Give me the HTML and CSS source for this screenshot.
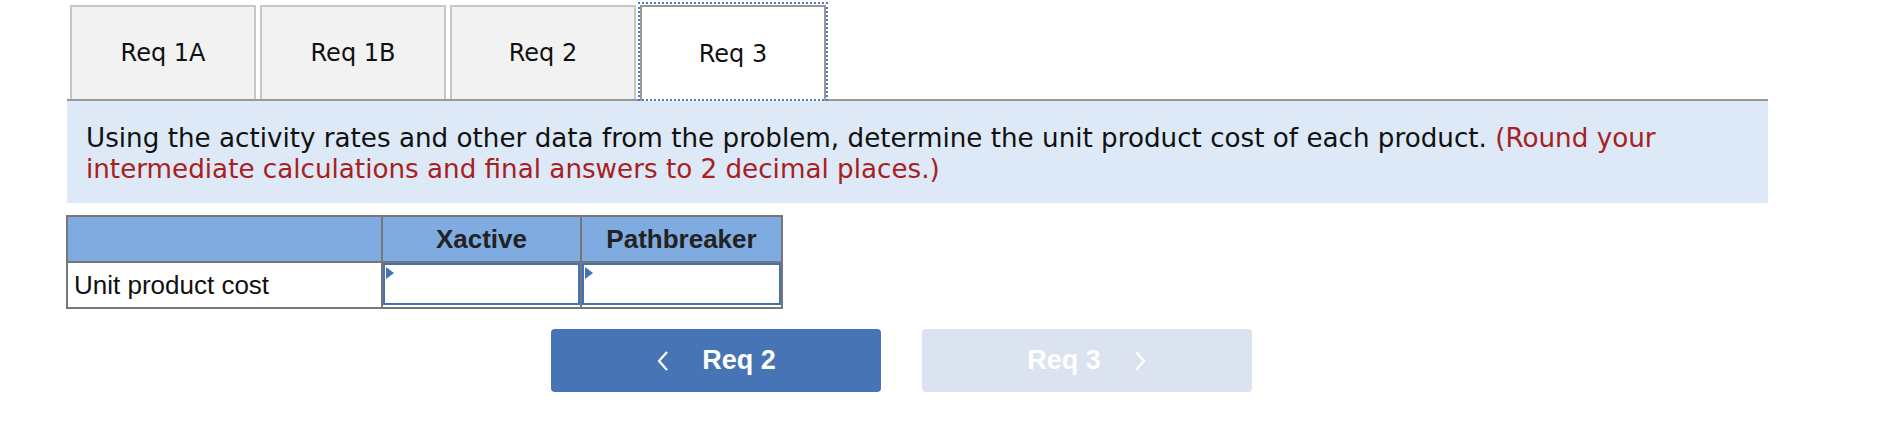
FILE: index.html
```html
<!DOCTYPE html>
<html lang="en">
<head>
<meta charset="utf-8">
<title>Req 3</title>
<link rel="stylesheet" href="styles.css">
</head>
<body>
<div class="page">
  <div class="tabs">
    <div class="tab">Req 1A</div>
    <div class="tab">Req 1B</div>
    <div class="tab">Req 2</div>
    <div class="tab active">Req 3</div>
  </div>
  <div class="panel">
    <p class="instr">Using the activity rates and other data from the problem, determine the unit product cost of each product. <span class="note">(Round your intermediate calculations and final answers to 2 decimal places.)</span></p>
  </div>
  <table class="grid">
    <thead>
      <tr><th class="c1"></th><th class="c2">Xactive</th><th class="c3">Pathbreaker</th></tr>
    </thead>
    <tbody>
      <tr>
        <td class="label">Unit product cost</td>
        <td class="cell"><div class="input"><span class="flag"></span></div></td>
        <td class="cell"><div class="input"><span class="flag"></span></div></td>
      </tr>
    </tbody>
  </table>
  <div class="nav">
    <button class="btn prev"><svg class="chev" width="14" height="22" viewBox="0 0 14 22"><polyline points="11,2 3,11 11,20" fill="none" stroke="#fff" stroke-width="2.2"/></svg><span>Req 2</span></button>
    <button class="btn next"><span>Req 3</span><svg class="chev" width="14" height="22" viewBox="0 0 14 22"><polyline points="3,2 11,11 3,20" fill="none" stroke="#fff" stroke-width="2.2"/></svg></button>
  </div>
</div>
</body>
</html>
```
FILE: styles.css
```css
* { box-sizing: border-box; }
html, body { margin: 0; padding: 0; background: #fff; }
.page { padding-left: 67px; width: 1768px; }

.tabs {
  display: flex;
  gap: 4px;
  padding-left: 3px;
  padding-top: 5px;
  border-bottom: 2px solid #999;
  height: 101px;
}
.tab {
  width: 186px;
  height: 94px;
  background: #f2f2f2;
  border: 2px solid #c6c6c6;
  border-bottom: 0;
  display: flex;
  align-items: center;
  justify-content: center;
  font-family: "DejaVu Sans", Verdana, sans-serif;
  font-size: 24px;
  color: #111;
}
.tab.active {
  background: #fff;
  border-color: #999;
  height: 96px;
  position: relative;
  margin-bottom: -2px;
}
.tab.active::after {
  content: "";
  position: absolute;
  left: -4px;
  right: -4px;
  top: -5px;
  bottom: 0;
  border: 2px dotted #4a7cc4;
}

.panel {
  background: #dde9f7;
  height: 102px;
  padding: 22px 19px 0 19px;
}
.instr {
  margin: 0;
  font-family: "DejaVu Sans", Verdana, sans-serif;
  font-size: 26.2px;
  line-height: 31px;
  color: #111;
}
.note { color: #a8201f; }

.grid {
  margin-top: 12px;
  margin-left: -1px;
  border-collapse: collapse;
  font-family: "Liberation Sans", Arial, sans-serif;
  font-size: 26px;
}
.grid th, .grid td {
  border: 2px solid #777;
  padding: 0;
}
.grid th {
  background: #80abe0;
  height: 46px;
  font-weight: bold;
  color: #222;
  text-align: center;
}
.c1 { width: 315px; }
.c2 { width: 199px; }
.c3 { width: 201px; }
.grid td { height: 46px; }
.label { padding-left: 6px !important; color: #111; }
.cell { vertical-align: top; }
.input {
  position: relative;
  height: 42px;
  border: 2px solid #4472b4;
  background: #fff;
}
.flag {
  position: absolute;
  left: 1px;
  top: 2px;
  width: 0;
  height: 0;
  border-left: 8px solid #4472b4;
  border-top: 6px solid transparent;
  border-bottom: 6px solid transparent;
}

.nav {
  display: flex;
  gap: 41px;
  margin-top: 20px;
  padding-left: 484px;
}
.btn {
  width: 330px;
  height: 63px;
  border: 0;
  border-radius: 4px;
  display: flex;
  align-items: center;
  justify-content: center;
  gap: 32px;
  font-family: "Liberation Sans", Arial, sans-serif;
  font-weight: bold;
  font-size: 27px;
  color: #fff;
  padding: 0;
}
.btn.prev { background: #4674b4; }
.btn.next { background: #dae3ef; }
.chev { display: block; }
```
